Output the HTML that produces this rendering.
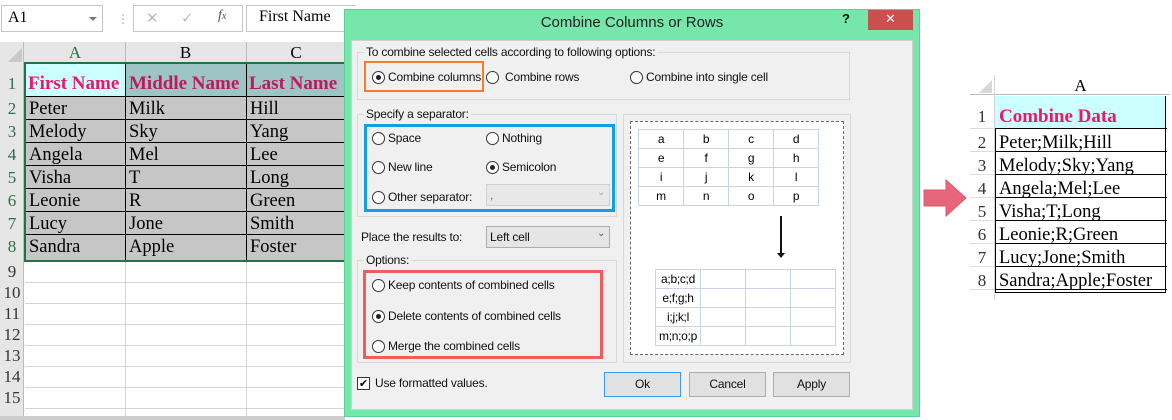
<!DOCTYPE html>
<html><head><meta charset="utf-8"><style>
*{margin:0;padding:0;box-sizing:border-box}
body{width:1172px;height:420px;position:relative;background:#fff;overflow:hidden;font-family:"Liberation Serif",serif}
.a{position:absolute}
.ui{font-family:"Liberation Sans",sans-serif;font-size:12px;letter-spacing:-0.2px;color:#111;white-space:nowrap}
.cell{position:absolute;font-size:18.5px;color:#000;padding-left:3px;line-height:22px;white-space:nowrap}
.rn{position:absolute;width:24px;text-align:center;font-size:17px;color:#2b6e4a}
.rad{position:absolute;width:13px;height:13px;border:1px solid #333;border-radius:50%;background:#fff}
.rad.on::after{content:"";position:absolute;left:3px;top:3px;width:5px;height:5px;border-radius:50%;background:#222}
.btn{position:absolute;height:25px;border:1px solid #adadad;background:#e1e1e1;text-align:center;line-height:23px}
table.g{position:absolute;border-collapse:collapse;font-family:"Liberation Sans",sans-serif;font-size:12px;letter-spacing:-0.3px;table-layout:fixed;width:181px}
table.g td{border:1px solid #c9d3e3;width:45px;height:19px;text-align:center;padding:0;overflow:hidden;white-space:nowrap}
</style></head><body>
<div class="a" style="left:1px;top:5px;width:102px;height:27px;border:1px solid #c6c6c6"></div>
<div class="a" style="left:8px;top:9px;font-family:'Liberation Serif';font-size:16px">A1</div>
<div class="a" style="left:89px;top:17px;border:4px solid transparent;border-top:4px solid #777"></div>
<div class="a" style="left:117px;top:12px;color:#aaa;font-size:12px">⋮</div>
<div class="a" style="left:133px;top:5px;width:110px;height:27px;border:1px solid #c6c6c6"></div>
<div class="a" style="left:146px;top:9px;color:#bbb;font-size:15px">✕</div>
<div class="a" style="left:181px;top:9px;color:#bbb;font-size:15px">✓</div>
<div class="a" style="left:218px;top:8px;color:#555;font-size:14px;font-style:italic">f<span style="font-size:10px">x</span></div>
<div class="a" style="left:246px;top:5px;width:110px;height:27px;border:1px solid #c6c6c6;border-right:none"></div>
<div class="a" style="left:259px;top:8px;font-size:16px">First Name</div>
<div class="a" style="left:0;top:42px;width:345px;height:21px;background:#e6e6e6;border-bottom:1px solid #bbb"></div>
<div class="a" style="left:0;top:42px;width:24px;height:378px;background:#e6e6e6;border-right:1px solid #bbb"></div>
<div class="a" style="left:8px;top:48px;border-left:14px solid transparent;border-bottom:14px solid #c8c8c8"></div>
<div class="a" style="left:25px;top:43px;width:100px;text-align:center;font-size:17px;color:#2b6e4a">A</div>
<div class="a" style="left:125px;top:43px;width:121px;text-align:center;font-size:17px">B</div>
<div class="a" style="left:246px;top:43px;width:100px;text-align:center;font-size:17px">C</div>
<div class="a" style="left:125px;top:42px;width:1px;height:21px;background:#bbb"></div>
<div class="a" style="left:246px;top:42px;width:1px;height:21px;background:#bbb"></div>
<div class="a" style="left:25px;top:262px;width:320px;height:158px;background:repeating-linear-gradient(to bottom,transparent 0,transparent 20px,#d4d4d4 20px,#d4d4d4 21px)"></div>
<div class="a" style="left:125px;top:262px;width:1px;height:158px;background:#d4d4d4"></div>
<div class="a" style="left:246px;top:262px;width:1px;height:158px;background:#d4d4d4"></div>
<div class="a" style="left:24px;top:62px;width:322px;height:200px;border:2px solid #217346;border-right:none;background:#c6c6c6"></div>
<div class="a" style="left:26px;top:64px;width:99px;height:32px;background:#ccffff"></div>
<div class="a" style="left:126px;top:64px;width:220px;height:32px;background:#9cc5c3"></div>
<div class="a" style="left:125px;top:64px;width:1px;height:196px;background:#000"></div>
<div class="a" style="left:246px;top:64px;width:1px;height:196px;background:#000"></div>
<div class="a" style="left:26px;top:96px;width:320px;height:139px;background:repeating-linear-gradient(to bottom,#000 0,#000 1px,transparent 1px,transparent 23px)"></div>
<div class="cell" style="left:25px;top:73px;font-weight:bold;color:#e8196a;font-size:19px">First Name</div>
<div class="cell" style="left:126px;top:73px;font-weight:bold;color:#c0185e;font-size:19px">Middle Name</div>
<div class="cell" style="left:246px;top:73px;font-weight:bold;color:#c0185e;font-size:19px">Last Name</div>
<div class="rn" style="top:74px">1</div>
<div class="rn" style="top:99px">2</div><div class="cell" style="left:26px;top:98px">Peter</div><div class="cell" style="left:126px;top:98px">Milk</div><div class="cell" style="left:247px;top:98px">Hill</div>
<div class="rn" style="top:122px">3</div><div class="cell" style="left:26px;top:121px">Melody</div><div class="cell" style="left:126px;top:121px">Sky</div><div class="cell" style="left:247px;top:121px">Yang</div>
<div class="rn" style="top:145px">4</div><div class="cell" style="left:26px;top:144px">Angela</div><div class="cell" style="left:126px;top:144px">Mel</div><div class="cell" style="left:247px;top:144px">Lee</div>
<div class="rn" style="top:168px">5</div><div class="cell" style="left:26px;top:167px">Visha</div><div class="cell" style="left:126px;top:167px">T</div><div class="cell" style="left:247px;top:167px">Long</div>
<div class="rn" style="top:191px">6</div><div class="cell" style="left:26px;top:190px">Leonie</div><div class="cell" style="left:126px;top:190px">R</div><div class="cell" style="left:247px;top:190px">Green</div>
<div class="rn" style="top:214px">7</div><div class="cell" style="left:26px;top:213px">Lucy</div><div class="cell" style="left:126px;top:213px">Jone</div><div class="cell" style="left:247px;top:213px">Smith</div>
<div class="rn" style="top:237px">8</div><div class="cell" style="left:26px;top:236px">Sandra</div><div class="cell" style="left:126px;top:236px">Apple</div><div class="cell" style="left:247px;top:236px">Foster</div>
<div class="rn" style="top:262px;color:#333">9</div>
<div class="rn" style="top:283px;color:#333">10</div>
<div class="rn" style="top:304px;color:#333">11</div>
<div class="rn" style="top:325px;color:#333">12</div>
<div class="rn" style="top:346px;color:#333">13</div>
<div class="rn" style="top:367px;color:#333">14</div>
<div class="rn" style="top:388px;color:#333">15</div>
<div class="a" style="left:0;top:416px;width:345px;height:4px;background:#ccc"></div>

<div class="a" style="left:344px;top:9px;width:576px;height:408px;background:#77e6ab;border:1px solid #5fcf93"></div>
<div class="a ui" style="left:344px;top:14px;width:576px;text-align:center;font-size:15px;letter-spacing:0;color:#222">Combine Columns or Rows</div>
<div class="a ui" style="left:842px;top:11px;font-weight:bold;font-size:13px">?</div>
<div class="a" style="left:868px;top:10px;width:45px;height:20px;background:#c9504e;color:#fff;text-align:center;font:bold 13px 'DejaVu Sans';line-height:20px">✕</div>
<div class="a" style="left:351px;top:40px;width:562px;height:370px;background:#f0f0f0;border:1px solid #cfcfcf"></div>
<div class="a" style="left:357px;top:52px;width:493px;height:48px;border:1px solid #d8d8d8"></div>
<div class="a ui" style="left:364px;top:45px;background:#f0f0f0;padding:0 2px">To combine selected cells according to following options:</div>
<div class="a" style="left:364px;top:61px;width:120px;height:31px;border:2px solid #f47c2d"></div>
<div class="rad on" style="left:372px;top:71px"></div><div class="a ui" style="left:388px;top:70px">Combine columns</div>
<div class="rad" style="left:486px;top:71px"></div><div class="a ui" style="left:505px;top:70px">Combine rows</div>
<div class="rad" style="left:630px;top:71px"></div><div class="a ui" style="left:646px;top:70px">Combine into single cell</div>
<div class="a" style="left:357px;top:114px;width:260px;height:103px;border:1px solid #d8d8d8"></div>
<div class="a ui" style="left:364px;top:107px;background:#f0f0f0;padding:0 2px">Specify a separator:</div>
<div class="a" style="left:364px;top:124px;width:251px;height:88px;border:3px solid #159ee3"></div>
<div class="rad" style="left:372px;top:132px"></div><div class="a ui" style="left:388px;top:131px">Space</div>
<div class="rad" style="left:486px;top:132px"></div><div class="a ui" style="left:502px;top:131px">Nothing</div>
<div class="rad" style="left:372px;top:161px"></div><div class="a ui" style="left:388px;top:160px">New line</div>
<div class="rad on" style="left:486px;top:161px"></div><div class="a ui" style="left:502px;top:160px">Semicolon</div>
<div class="rad" style="left:372px;top:191px"></div><div class="a ui" style="left:388px;top:190px">Other separator:</div>
<div class="a" style="left:486px;top:184px;width:124px;height:22px;border:1px solid #d0d0d0;background:#e8e8e8"></div>
<div class="a ui" style="left:490px;top:188px;color:#666">,</div>
<div class="a ui" style="left:597px;top:187px;color:#aaa;font-size:10px">⌄</div>
<div class="a ui" style="left:361px;top:230px">Place the results to:</div>
<div class="a" style="left:486px;top:226px;width:124px;height:22px;border:1px solid #adadad;background:#e5e5e5"></div>
<div class="a ui" style="left:490px;top:230px">Left cell</div>
<div class="a ui" style="left:597px;top:228px;color:#555;font-size:10px">⌄</div>
<div class="a" style="left:357px;top:260px;width:260px;height:103px;border:1px solid #d8d8d8"></div>
<div class="a ui" style="left:364px;top:253px;background:#f0f0f0;padding:0 2px">Options:</div>
<div class="a" style="left:363px;top:270px;width:240px;height:89px;border:3px solid #f05d5d"></div>
<div class="rad" style="left:372px;top:279px"></div><div class="a ui" style="left:388px;top:278px">Keep contents of combined cells</div>
<div class="rad on" style="left:372px;top:310px"></div><div class="a ui" style="left:388px;top:309px">Delete contents of combined cells</div>
<div class="rad" style="left:372px;top:340px"></div><div class="a ui" style="left:388px;top:339px">Merge the combined cells</div>
<div class="a" style="left:623px;top:114px;width:228px;height:249px;border:1px solid #d8d8d8"></div>
<div class="a" style="left:630px;top:121px;width:214px;height:234px;border:1px dashed #666;background:#fff"></div>
<table class="g" style="left:638px;top:129px">
<tr><td>a</td><td>b</td><td>c</td><td>d</td></tr>
<tr><td>e</td><td>f</td><td>g</td><td>h</td></tr>
<tr><td>i</td><td>j</td><td>k</td><td>l</td></tr>
<tr><td>m</td><td>n</td><td>o</td><td>p</td></tr></table>
<div class="a" style="left:780px;top:216px;width:2px;height:38px;background:#111"></div>
<div class="a" style="left:777px;top:253px;border:4px solid transparent;border-top:5px solid #111"></div>
<table class="g" style="left:655px;top:269px">
<tr><td>a;b;c;d</td><td></td><td></td><td></td></tr>
<tr><td>e;f;g;h</td><td></td><td></td><td></td></tr>
<tr><td>i;j;k;l</td><td></td><td></td><td></td></tr>
<tr><td>m;n;o;p</td><td></td><td></td><td></td></tr></table>
<div class="a" style="left:357px;top:377px;width:13px;height:13px;border:1px solid #333;background:#fff;font:bold 11px 'DejaVu Sans';line-height:11px;text-align:center">✔</div>
<div class="a ui" style="left:375px;top:376px">Use formatted values.</div>
<div class="btn ui" style="left:604px;top:372px;width:77px;border-color:#3c9be6">Ok</div>
<div class="btn ui" style="left:689px;top:372px;width:77px">Cancel</div>
<div class="btn ui" style="left:773px;top:372px;width:77px">Apply</div>

<div class="a" style="left:970px;top:75px;width:200px;height:20px;background:#fff;border-bottom:1px solid #bbb"></div>
<div class="a" style="left:979px;top:80px;border-left:13px solid transparent;border-bottom:13px solid #d8d8d8"></div>
<div class="a" style="left:994px;top:75px;width:1px;height:225px;background:#d4d4d4"></div>
<div class="a" style="left:995px;top:76px;width:171px;text-align:center;font-size:17px">A</div>
<div class="a" style="left:995px;top:96px;width:171px;height:197px;border:1px solid #000;border-top:none"></div>
<div class="a" style="left:995px;top:96px;width:171px;height:32px;background:#ccffff;border-right:1px solid #000"></div>
<div class="a" style="left:995px;top:128px;width:172px;height:166px;background:repeating-linear-gradient(to bottom,#000 0,#000 1px,transparent 1px,transparent 23px)"></div>
<div class="a" style="left:970px;top:128px;width:25px;height:166px;background:repeating-linear-gradient(to bottom,#ddd 0,#ddd 1px,transparent 1px,transparent 23px)"></div>
<div class="cell" style="left:996px;top:106px;font-weight:bold;color:#e8196a;font-size:19px">Combine Data</div>
<div class="rn" style="left:970px;top:107px;color:#333">1</div>
<div class="rn" style="left:970px;top:133px;color:#333">2</div><div class="cell" style="left:996px;top:132px">Peter;Milk;Hill</div>
<div class="rn" style="left:970px;top:156px;color:#333">3</div><div class="cell" style="left:996px;top:155px">Melody;Sky;Yang</div>
<div class="rn" style="left:970px;top:179px;color:#333">4</div><div class="cell" style="left:996px;top:178px">Angela;Mel;Lee</div>
<div class="rn" style="left:970px;top:202px;color:#333">5</div><div class="cell" style="left:996px;top:201px">Visha;T;Long</div>
<div class="rn" style="left:970px;top:225px;color:#333">6</div><div class="cell" style="left:996px;top:224px">Leonie;R;Green</div>
<div class="rn" style="left:970px;top:248px;color:#333">7</div><div class="cell" style="left:996px;top:247px">Lucy;Jone;Smith</div>
<div class="rn" style="left:970px;top:271px;color:#333">8</div><div class="cell" style="left:996px;top:270px">Sandra;Apple;Foster</div>
<svg class="a" style="left:922px;top:178px" width="46" height="42"><path d="M2 12 H24 V2 L44 20 L24 38 V28 H2 Z" fill="#e8667a" stroke="#d9586c"/></svg>
</body></html>
